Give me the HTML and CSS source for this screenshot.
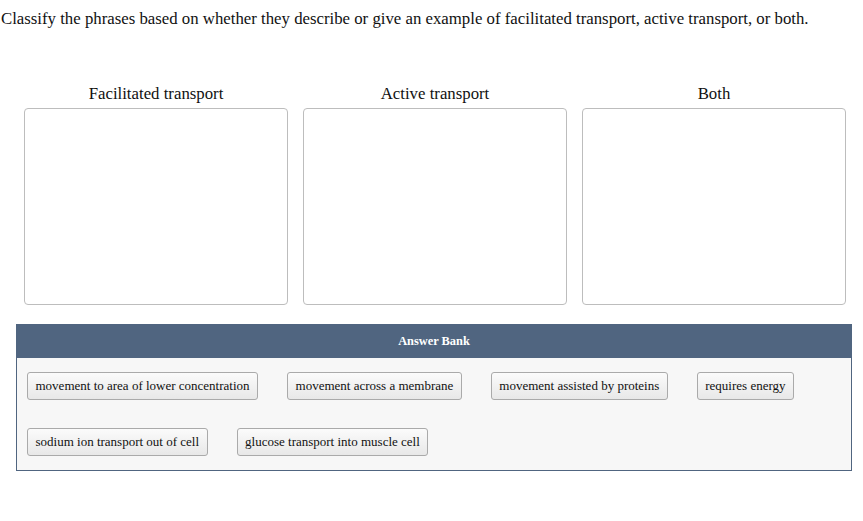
FILE: index.html
```html
<!DOCTYPE html>
<html lang="en">

<head>
  <meta charset="UTF-8">
  <meta name="viewport" content="width=device-width, initial-scale=1.0">
  <title>Classify the phrases</title>
  <link rel="stylesheet" href="styles.css">
</head>

<body>
  <p class="prompt">Classify the phrases based on whether they describe or give an example of facilitated transport, active transport, or both.</p>

  <div class="bins">
    <div class="bin">
      <h2>Facilitated transport</h2>
      <div class="drop-zone"></div>
    </div>
    <div class="bin">
      <h2>Active transport</h2>
      <div class="drop-zone"></div>
    </div>
    <div class="bin">
      <h2>Both</h2>
      <div class="drop-zone"></div>
    </div>
  </div>

  <div class="answer-bank">
    <div class="answer-bank-title">Answer Bank</div>
    <div class="answer-items">
      <button class="answer">movement to area of lower concentration</button>
      <button class="answer">movement across a membrane</button>
      <button class="answer">movement assisted by proteins</button>
      <button class="answer">requires energy</button>
      <button class="answer">sodium ion transport out of cell</button>
      <button class="answer">glucose transport into muscle cell</button>
    </div>
  </div>
</body>

</html>
```

FILE: styles.css
```css
body {
  font-family: "Liberation Serif", "Times New Roman", serif;
  margin: 0;
  padding: 0;
  background-color: #fff;
  color: #111;
}

.prompt {
  margin: 0;
  padding: 10px 1px;
  font-size: 16.8px;
  line-height: 18px;
}

.bins {
  display: flex;
  gap: 15px;
  margin: 47px 0 0 24px;
}

.bin {
  width: 264px;
}

.bin h2 {
  margin: 0 0 5px;
  font-size: 16.8px;
  font-weight: normal;
  line-height: 18px;
  text-align: center;
}

.drop-zone {
  height: 195px;
  border: 1px solid #bdbdbd;
  border-radius: 4px;
}

.answer-bank {
  width: 836px;
  margin: 19px 0 0 16px;
}

.answer-bank-title {
  height: 34px;
  line-height: 34px;
  background-color: #506580;
  color: #fff;
  font-size: 12.4px;
  font-weight: bold;
  text-align: center;
}

.answer-items {
  display: flex;
  flex-wrap: wrap;
  gap: 28px 29px;
  padding: 14px 10px;
  background-color: #f7f7f7;
  border: 1px solid #506580;
  border-top: none;
}

.answer {
  height: 28px;
  padding: 0 7.5px;
  font-family: "Liberation Serif", "Times New Roman", serif;
  font-size: 13px;
  color: #111;
  background: linear-gradient(#fbfbfb, #e8e8e8);
  border: 1px solid #aaa;
  border-radius: 3px;
  cursor: pointer;
}
```
